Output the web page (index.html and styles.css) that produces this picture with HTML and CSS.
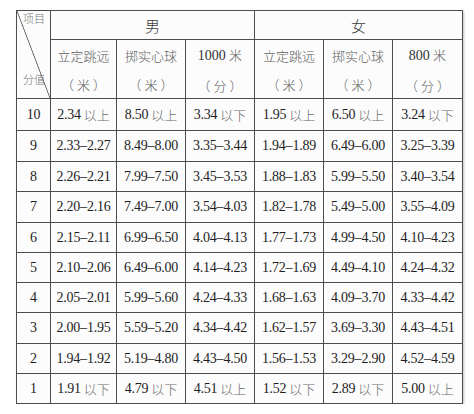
FILE: index.html
```html
<!DOCTYPE html>
<html lang="zh">
<head>
<meta charset="utf-8">
<link rel="stylesheet" href="styles.css">
</head>
<body>
<div class="sheet">
  <div class="cell corner">
    <span class="c-top">项目</span>
    <span class="c-bot">分值</span>
  </div>
  <div class="cell sex male">男</div>
  <div class="cell sex female">女</div>

  <div class="cell head"><span class="cj">立定跳远</span><span class="cj unit">（米）</span></div>
  <div class="cell head"><span class="cj">掷实心球</span><span class="cj unit">（米）</span></div>
  <div class="cell head"><span><span class="num">1000</span> <span class="cj">米</span></span><span class="cj unit">（分）</span></div>
  <div class="cell head"><span class="cj">立定跳远</span><span class="cj unit">（米）</span></div>
  <div class="cell head"><span class="cj">掷实心球</span><span class="cj unit">（米）</span></div>
  <div class="cell head"><span><span class="num">800</span> <span class="cj">米</span></span><span class="cj unit">（分）</span></div>

  <div class="cell d">10</div><div class="cell d">2.34 <span class="cj">以上</span></div><div class="cell d">8.50 <span class="cj">以上</span></div><div class="cell d">3.34 <span class="cj">以下</span></div><div class="cell d">1.95 <span class="cj">以上</span></div><div class="cell d">6.50 <span class="cj">以上</span></div><div class="cell d">3.24 <span class="cj">以下</span></div>
  <div class="cell d">9</div><div class="cell d">2.33–2.27</div><div class="cell d">8.49–8.00</div><div class="cell d">3.35–3.44</div><div class="cell d">1.94–1.89</div><div class="cell d">6.49–6.00</div><div class="cell d">3.25–3.39</div>
  <div class="cell d">8</div><div class="cell d">2.26–2.21</div><div class="cell d">7.99–7.50</div><div class="cell d">3.45–3.53</div><div class="cell d">1.88–1.83</div><div class="cell d">5.99–5.50</div><div class="cell d">3.40–3.54</div>
  <div class="cell d">7</div><div class="cell d">2.20–2.16</div><div class="cell d">7.49–7.00</div><div class="cell d">3.54–4.03</div><div class="cell d">1.82–1.78</div><div class="cell d">5.49–5.00</div><div class="cell d">3.55–4.09</div>
  <div class="cell d">6</div><div class="cell d">2.15–2.11</div><div class="cell d">6.99–6.50</div><div class="cell d">4.04–4.13</div><div class="cell d">1.77–1.73</div><div class="cell d">4.99–4.50</div><div class="cell d">4.10–4.23</div>
  <div class="cell d">5</div><div class="cell d">2.10–2.06</div><div class="cell d">6.49–6.00</div><div class="cell d">4.14–4.23</div><div class="cell d">1.72–1.69</div><div class="cell d">4.49–4.10</div><div class="cell d">4.24–4.32</div>
  <div class="cell d">4</div><div class="cell d">2.05–2.01</div><div class="cell d">5.99–5.60</div><div class="cell d">4.24–4.33</div><div class="cell d">1.68–1.63</div><div class="cell d">4.09–3.70</div><div class="cell d">4.33–4.42</div>
  <div class="cell d">3</div><div class="cell d">2.00–1.95</div><div class="cell d">5.59–5.20</div><div class="cell d">4.34–4.42</div><div class="cell d">1.62–1.57</div><div class="cell d">3.69–3.30</div><div class="cell d">4.43–4.51</div>
  <div class="cell d">2</div><div class="cell d">1.94–1.92</div><div class="cell d">5.19–4.80</div><div class="cell d">4.43–4.50</div><div class="cell d">1.56–1.53</div><div class="cell d">3.29–2.90</div><div class="cell d">4.52–4.59</div>
  <div class="cell d">1</div><div class="cell d">1.91 <span class="cj">以下</span></div><div class="cell d">4.79 <span class="cj">以下</span></div><div class="cell d">4.51 <span class="cj">以上</span></div><div class="cell d">1.52 <span class="cj">以下</span></div><div class="cell d">2.89 <span class="cj">以下</span></div><div class="cell d">5.00 <span class="cj">以上</span></div>
</div>
</body>
</html>
```

FILE: styles.css
```css
html, body {
  margin: 0;
  padding: 0;
  background: #ffffff;
}

body {
  padding: 10px 0 0 16px;
  font-family: "Liberation Serif", "Noto Sans CJK SC", serif;
  color: #1e1e1e;
}

.sheet {
  display: grid;
  grid-template-columns: 33px 65px 68px 68px 68px 68px 69px;
  grid-template-rows: 28px 58px 31px 30px 29px 30px 29px 29px 29px 30px 29px 29px;
  gap: 1px;
  padding: 1px;
  width: max-content;
  background: #4e4e4e;
  box-shadow: 1px 1px 2px rgba(0, 0, 0, 0.25);
}

.cell {
  background: #fcfcfc;
  display: flex;
  align-items: center;
  justify-content: center;
  white-space: nowrap;
}

.cj {
  font-family: "Noto Sans CJK SC", sans-serif;
  font-weight: 300;
  color: #6a6a6a;
}

.num {
  font-family: "Liberation Serif", serif;
  color: #333;
}

.corner {
  grid-row: 1 / 3;
  grid-column: 1;
  flex-direction: column;
  align-items: stretch;
  justify-content: flex-start;
  background: linear-gradient(to top right, #fcfcfc calc(50% - 0.8px), #555 50%, #fcfcfc calc(50% + 0.8px));
  font-family: "Noto Sans CJK SC", sans-serif;
  font-weight: 300;
  color: #777;
  font-size: 11px;
  line-height: 1;
}

.c-top {
  padding: 2px 0 0 6px;
}

.c-bot {
  margin-top: auto;
  padding: 0 0 13px 6px;
}

.sex {
  grid-row: 1;
  font-family: "Noto Sans CJK SC", sans-serif;
  font-weight: 300;
  font-size: 15px;
  color: #3c3c3c;
}

.male {
  grid-column: 2 / 5;
}

.female {
  grid-column: 5 / 8;
}

.head {
  flex-direction: column;
  gap: 16px;
  font-size: 13px;
  line-height: 1;
  padding-top: 2px;
}

.head .cj {
  color: #5e5e5e;
}

.head .unit {
  letter-spacing: 3px;
  margin-right: -3px;
}

.head .num {
  font-size: 14px;
}

.d {
  font-size: 14px;
  letter-spacing: -0.2px;
}

.d .cj {
  font-size: 13px;
  letter-spacing: 0;
  margin-left: 3px;
}
```
